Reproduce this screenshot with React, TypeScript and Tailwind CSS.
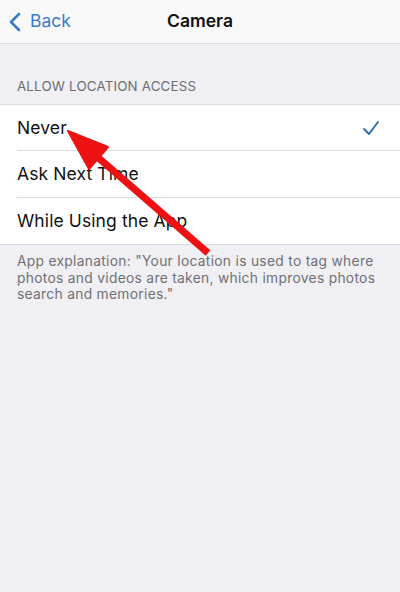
import { ReactNode } from "react"

type RowProp = {
    label: string,
    checked?: boolean,
    last?: boolean
}

const Row = ({ label, checked, last }: RowProp) => {
    return (
        <div className="pl-[17px] bg-white">
            <div className={`flex items-center justify-between h-[46.5px] pr-[20px] ${last ? "" : "border-b border-[#dcdce0]"}`}>
                <span className="text-[17.5px] text-[#111] tracking-[0.1px]">{label}</span>
                {checked && (
                    <svg width="18" height="16" viewBox="0 0 18 16" fill="none">
                        <path d="M2 9 L7 14 L16 2" stroke="#2f6fb4" strokeWidth="2" strokeLinecap="round" strokeLinejoin="round" />
                    </svg>
                )}
            </div>
        </div>
    )
}

const Section = ({ children }: { children: ReactNode }) => (
    <div className="border-y border-[#dcdce0]">{children}</div>
)

export default function App() {
    return (
        <div className="relative w-[400px] h-[592px] bg-[#efeff4] overflow-hidden" style={{ fontFamily: "Inter, 'Noto Sans', sans-serif" }}>
            {/* header */}
            <header className="relative flex items-center h-[44px] bg-[#f8f8f8] border-b border-[#d9d9dc]">
                <div className="flex items-center gap-[9px] pl-[9px] text-[#3a7bc4]">
                    <svg width="12" height="20" viewBox="0 0 12 20" fill="none">
                        <path d="M10 2 L2 10 L10 18" stroke="#3a7bc4" strokeWidth="2.6" strokeLinecap="round" strokeLinejoin="round" />
                    </svg>
                    <span className="text-[17.5px]">Back</span>
                </div>
                <h1 className="absolute left-0 right-0 text-center text-[17.5px] font-semibold text-[#111] pointer-events-none">Camera</h1>
            </header>

            {/* section header */}
            <div className="pt-[33px] pb-[7px] pl-[17px] text-[13.3px] text-[#6d6d72] uppercase tracking-[0.2px]">
                Allow Location Access
            </div>

            <Section>
                <Row label="Never" checked />
                <Row label="Ask Next Time" />
                <Row label="While Using the App" last />
            </Section>

            {/* footer */}
            <p className="pt-[8px] pl-[17px] pr-[24px] text-[13.8px] leading-[16.5px] tracking-[0.3px] text-[#707075]">
                App explanation: "Your location is used to tag where photos and videos are taken, which improves photos search and memories."
            </p>

            {/* red annotation arrow */}
            <svg className="absolute left-0 top-0 pointer-events-none" width="400" height="592" viewBox="0 0 400 592">
                <line x1="208" y1="253" x2="94" y2="154" stroke="#ee1111" strokeWidth="7" strokeLinecap="butt" />
                <polygon points="68,131 108,147 89,169" fill="#ee1111" stroke="#ee1111" strokeWidth="2" strokeLinejoin="round" />
            </svg>
        </div>
    )
}
